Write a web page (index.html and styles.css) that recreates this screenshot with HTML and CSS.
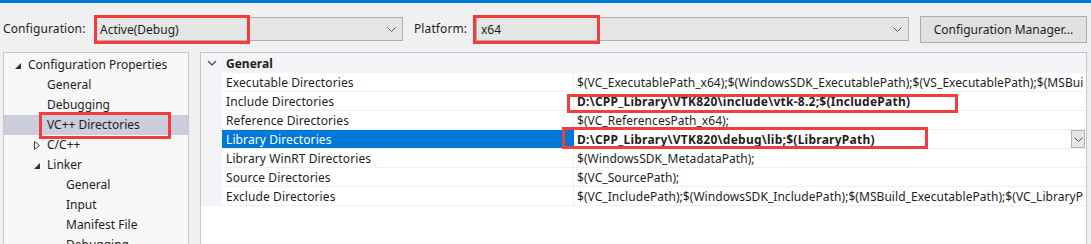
FILE: index.html
```html
<!DOCTYPE html>
<html lang="en">
<head>
    <meta charset="UTF-8">
    <title>Property Pages</title>
    <link rel="stylesheet" href="styles.css">
</head>
<body>
    <div class="titlebar"></div>

    <div class="toolbar">
        <span class="label config-label">Configuration:</span>
        <div class="combo config-combo">
            <span>Active(Debug)</span>
            <svg class="chev" width="9" height="5" viewBox="0 0 9 5"><polyline points="0.5,0.5 4.5,4.5 8.5,0.5" fill="none" stroke="#555" stroke-width="1"/></svg>
            <div class="mark mark-config"></div>
        </div>
        <span class="label platform-label">Platform:</span>
        <div class="combo platform-combo">
            <span>x64</span>
            <svg class="chev" width="9" height="5" viewBox="0 0 9 5"><polyline points="0.5,0.5 4.5,4.5 8.5,0.5" fill="none" stroke="#555" stroke-width="1"/></svg>
            <div class="mark mark-platform"></div>
        </div>
        <button class="manager">Configuration Manager...</button>
    </div>

    <div class="panels">
        <div class="tree">
            <div class="node lvl0"><svg class="tri" width="6" height="6" viewBox="0 0 6 6"><polygon points="6,0 6,6 0,6" fill="#333"/></svg>Configuration Properties</div>
            <div class="node lvl1">General</div>
            <div class="node lvl1">Debugging</div>
            <div class="node lvl1 selected">VC++ Directories<div class="mark mark-tree"></div></div>
            <div class="node lvl1 has-tri"><svg class="tri open" width="6" height="9" viewBox="0 0 6 9"><polygon points="0.5,0.5 5.5,4.5 0.5,8.5" fill="none" stroke="#444" stroke-width="1"/></svg>C/C++</div>
            <div class="node lvl1 has-tri"><svg class="tri" width="6" height="6" viewBox="0 0 6 6"><polygon points="6,0 6,6 0,6" fill="#333"/></svg>Linker</div>
            <div class="node lvl2">General</div>
            <div class="node lvl2">Input</div>
            <div class="node lvl2">Manifest File</div>
            <div class="node lvl2 last">Debugging</div>
        </div>

        <div class="grid">
            <div class="group">
                <svg class="group-chev" width="10" height="6" viewBox="0 0 10 6"><polyline points="1,1 5,5 9,1" fill="none" stroke="#555" stroke-width="1.4"/></svg>
                <span>General</span>
            </div>
            <div class="row">
                <div class="gutter"></div>
                <div class="name">Executable Directories</div>
                <div class="value">$(VC_ExecutablePath_x64);$(WindowsSDK_ExecutablePath);$(VS_ExecutablePath);$(MSBui</div>
            </div>
            <div class="row">
                <div class="gutter"></div>
                <div class="name">Include Directories</div>
                <div class="value bold">D:\CPP_Library\VTK820\include\vtk-8.2;$(IncludePath)<div class="mark mark-include"></div></div>
            </div>
            <div class="row">
                <div class="gutter"></div>
                <div class="name">Reference Directories</div>
                <div class="value">$(VC_ReferencesPath_x64);</div>
            </div>
            <div class="row active">
                <div class="gutter"></div>
                <div class="name">Library Directories</div>
                <div class="value bold">D:\CPP_Library\VTK820\debug\lib;$(LibraryPath)
                    <div class="drop"><svg width="9" height="5" viewBox="0 0 9 5"><polyline points="0.5,0.5 4.5,4.5 8.5,0.5" fill="none" stroke="#555" stroke-width="1"/></svg></div>
                    <div class="mark mark-library"></div>
                </div>
            </div>
            <div class="row">
                <div class="gutter"></div>
                <div class="name">Library WinRT Directories</div>
                <div class="value">$(WindowsSDK_MetadataPath);</div>
            </div>
            <div class="row">
                <div class="gutter"></div>
                <div class="name">Source Directories</div>
                <div class="value">$(VC_SourcePath);</div>
            </div>
            <div class="row">
                <div class="gutter"></div>
                <div class="name">Exclude Directories</div>
                <div class="value">$(VC_IncludePath);$(WindowsSDK_IncludePath);$(MSBuild_ExecutablePath);$(VC_LibraryP</div>
            </div>
        </div>
    </div>
</body>
</html>
```

FILE: styles.css
```css
body {
    margin: 0;
    background: #f0f0f0;
    font-family: "Noto Sans", "Liberation Sans", sans-serif;
    font-size: 12px;
    color: #1e1e1e;
    width: 1091px;
    height: 244px;
    overflow: hidden;
}
.titlebar {
    height: 3px;
    background: #0078d7;
}
.toolbar {
    display: flex;
    align-items: center;
    height: 30px;
    padding-top: 11px;
}
.label {
    line-height: 16px;
}
.config-label {
    margin-left: 3px;
    width: 92px;
    letter-spacing: 0.1px;
}
.platform-label {
    margin-left: 11px;
    width: 62px;
    letter-spacing: 0.1px;
}
.combo {
    position: relative;
    box-sizing: border-box;
    height: 24px;
    background: #e5e5e5;
    border: 1px solid #adadad;
    display: flex;
    align-items: center;
    padding-left: 4px;
}
.config-combo {
    width: 308px;
}
.platform-combo {
    width: 433px;
}
.combo .chev {
    margin-left: auto;
    margin-right: 6px;
}
.manager {
    box-sizing: border-box;
    margin-left: 11px;
    width: 167px;
    height: 27px;
    background: #e1e1e1;
    border: 1px solid #adadad;
    font-family: inherit;
    font-size: 12px;
    color: #1e1e1e;
    padding: 0;
}
/* red annotation boxes */
.mark {
    position: absolute;
    box-sizing: border-box;
    border: 3px solid #f33c3c;
    pointer-events: none;
}
.mark-config {
    left: -2px;
    top: -3px;
    width: 156px;
    height: 29px;
}
.mark-platform {
    left: -4px;
    top: -3px;
    width: 127px;
    height: 29px;
}
.panels {
    display: flex;
    margin-top: 8px;
    height: 200px;
}
.tree {
    box-sizing: border-box;
    margin-left: 3px;
    width: 186px;
    height: 200px;
    border: 1px solid #c6c6c6;
    border-bottom: none;
    background: #f7f7f7;
    padding-top: 2px;
    overflow: hidden;
}
.node {
    position: relative;
    height: 20px;
    line-height: 20px;
    white-space: nowrap;
}
.node.last {
    height: 12px;
}
.lvl0 {
    padding-left: 24px;
}
.lvl1 {
    padding-left: 43px;
}
.lvl2 {
    padding-left: 62px;
}
.tri {
    position: absolute;
    top: 8px;
}
.lvl0 .tri {
    left: 11px;
}
.has-tri .tri {
    left: 30px;
}
.has-tri .tri.open {
    top: 6px;
}
.selected {
    background: #cccedb;
}
.mark-tree {
    left: 35px;
    top: -3px;
    width: 132px;
    height: 27px;
}
.grid {
    box-sizing: border-box;
    margin-left: 11px;
    width: 887px;
    height: 200px;
    border: 1px solid #c6c6c6;
    border-bottom: none;
    background: #fff;
}
.group {
    display: flex;
    align-items: center;
    height: 20px;
    background: #f2f4f7;
    font-weight: bold;
}
.group-chev {
    margin-left: 6px;
    margin-right: 9px;
}
.row {
    display: flex;
    height: 19px;
    line-height: 19px;
    white-space: nowrap;
}
.gutter {
    width: 21px;
    background: #f2f4f7;
    flex: none;
}
.name {
    box-sizing: border-box;
    width: 352px;
    flex: none;
    padding-left: 4px;
    border-bottom: 1px solid #eef0f3;
    border-right: 1px solid #eef0f3;
    letter-spacing: 0.1px;
}
.value {
    position: relative;
    flex: 1;
    min-width: 0;
    padding-left: 3px;
    border-bottom: 1px solid #eef0f3;
    clip-path: inset(-10px 0 -10px -20px);
    letter-spacing: 0.05px;
}
.bold {
    font-weight: bold;
    letter-spacing: 0.25px;
}
.active .name {
    background: #0078d7;
    color: #fff;
    border-right-color: #0078d7;
}
.drop {
    position: absolute;
    right: 1px;
    top: 0;
    box-sizing: border-box;
    width: 14px;
    height: 18px;
    background: #e6e6e6;
    border: 1px solid #b4b4b4;
    display: flex;
    align-items: center;
    justify-content: center;
}
.mark-include {
    left: -7px;
    top: 2px;
    width: 391px;
    height: 19px;
}
.mark-library {
    left: -12px;
    top: -3px;
    width: 366px;
    height: 22px;
}
```
